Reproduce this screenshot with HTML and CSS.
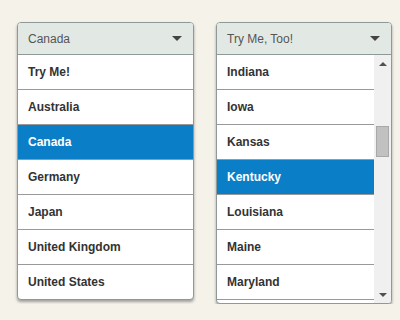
FILE: index.html
```html
<!DOCTYPE html>
<html lang="en">
<head>
    <meta charset="UTF-8">
    <title>Dropdowns</title>
    <link rel="stylesheet" href="styles.css">
</head>
<body>
    <div class="demo">
        <!-- Plain dropdown, opened -->
        <div class="dropdown dropdown-left">
            <div class="dropdownHeader">
                <span class="dropdownLabel">Canada</span>
                <span class="caret"></span>
            </div>
            <ul class="dropdownList">
                <li>Try Me!</li>
                <li>Australia</li>
                <li class="selected">Canada</li>
                <li>Germany</li>
                <li>Japan</li>
                <li>United Kingdom</li>
                <li class="last">United States</li>
            </ul>
        </div>

        <!-- Dropdown with a scrollbar -->
        <div class="dropdown dropdown-right">
            <div class="dropdownHeader">
                <span class="dropdownLabel">Try Me, Too!</span>
                <span class="caret"></span>
            </div>
            <div class="scrollBody">
                <ul class="dropdownList clipped">
                    <li>Indiana</li>
                    <li>Iowa</li>
                    <li>Kansas</li>
                    <li class="selected">Kentucky</li>
                    <li>Louisiana</li>
                    <li>Maine</li>
                    <li>Maryland</li>
                    <li class="peek"></li>
                </ul>
                <div class="scrollBar">
                    <div class="scrollBtn"><span class="arrowUp"></span></div>
                    <div class="scrollTrack"><div class="scrollThumb"></div></div>
                    <div class="scrollBtn"><span class="arrowDown"></span></div>
                </div>
            </div>
        </div>
    </div>
</body>
</html>
```

FILE: styles.css
```css
/* General page */
body {
    margin: 0;
    background-color: #f5f2ea;
    font-family: "Liberation Sans", Arial, sans-serif;
    color: #333;
}

.demo {
    display: flex;
    align-items: flex-start;
    gap: 22px;
    padding: 22px 0 0 17px;
}

/* Dropdown box */
.dropdown {
    border: 1px solid #8f9a98;
    border-radius: 4px;
    background-color: white;
    box-shadow: 0 2px 3px rgba(0, 0, 0, 0.35);
    overflow: hidden;
}

.dropdown-left { width: 175px; }
.dropdown-right { width: 174px; }

.dropdownHeader {
    display: flex;
    align-items: center;
    justify-content: space-between;
    height: 31px;
    padding: 0 11px 0 10px;
    background-color: #e2e9e5;
    border-bottom: 1px solid #8f9a98;
    font-size: 12px;
    color: #555;
}

/* Down caret in the header */
.caret {
    width: 0;
    height: 0;
    border-left: 5px solid transparent;
    border-right: 5px solid transparent;
    border-top: 5px solid #444;
}

/* Items */
.dropdownList {
    list-style: none;
    margin: 0;
    padding: 0;
}

.dropdownList li {
    height: 34px;
    line-height: 34px;
    padding-left: 10px;
    border-bottom: 1px solid #999;
    font-size: 12px;
    font-weight: bold;
    color: #333;
}

.dropdownList li.last { border-bottom: none; }

.dropdownList li.selected {
    background-color: #0a7fc8;
    color: white;
}

/* Scrolling list */
.scrollBody {
    display: flex;
    height: 248px;
    overflow: hidden;
}

.clipped { flex: 1; }

.scrollBar {
    display: flex;
    flex-direction: column;
    width: 17px;
    background-color: #f0f0f0;
}

.scrollBtn {
    display: flex;
    align-items: center;
    justify-content: center;
    height: 17px;
}

.scrollTrack { flex: 1; }

.scrollThumb {
    height: 31px;
    margin: 54px 2px 0 2px;
    background-color: #c1c1c1;
    border: 1px solid #a8a8a8;
    box-sizing: border-box;
}

.arrowUp, .arrowDown {
    width: 0;
    height: 0;
    border-left: 4px solid transparent;
    border-right: 4px solid transparent;
}

.arrowUp { border-bottom: 4px solid #505050; }
.arrowDown { border-top: 4px solid #505050; }
```
